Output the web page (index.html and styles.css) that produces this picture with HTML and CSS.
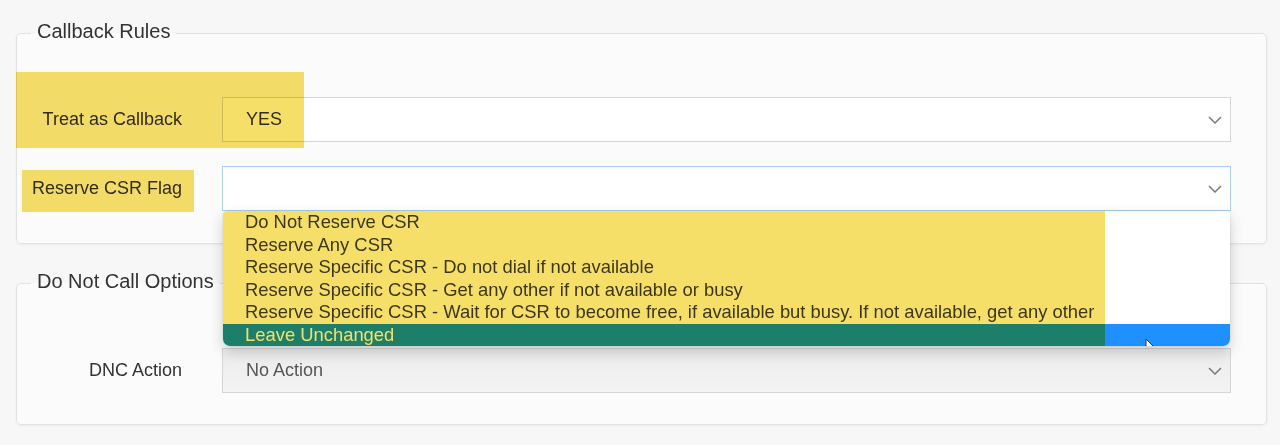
FILE: index.html
```html
<!DOCTYPE html>
<html lang="en">
<head>
<meta charset="utf-8">
<title>Callback Rules</title>
<link rel="stylesheet" href="styles.css">
</head>
<body>
<div class="page">
  <fieldset class="group group-callback">
    <legend class="legend">Callback Rules</legend>
    <div class="form">
      <label class="label">Treat as Callback</label>
      <div class="select">
        <span class="value">YES</span>
        <svg class="chev" width="14" height="8" viewBox="0 0 14 8"><path d="M1 1 L7 7 L13 1" fill="none" stroke="#7a7a7a" stroke-width="1.5"/></svg>
      </div>
      <label class="label">Reserve CSR Flag</label>
      <div class="select select-focus">
        <span class="value"></span>
        <svg class="chev" width="14" height="8" viewBox="0 0 14 8"><path d="M1 1 L7 7 L13 1" fill="none" stroke="#7a7a7a" stroke-width="1.5"/></svg>
        <ul class="dropdown">
          <li class="opt">Do Not Reserve CSR</li>
          <li class="opt">Reserve Any CSR</li>
          <li class="opt">Reserve Specific CSR - Do not dial if not available</li>
          <li class="opt">Reserve Specific CSR - Get any other if not available or busy</li>
          <li class="opt">Reserve Specific CSR - Wait for CSR to become free, if available but busy. If not available, get any other</li>
          <li class="opt opt-selected">Leave Unchanged</li>
          <li class="mark mark-list"></li>
          <li class="cursor"><svg width="11" height="17" viewBox="0 0 11 17"><path d="M1 1 L1 14 L4 11 L6.5 16 L8.5 15 L6 10 L10 10 Z" fill="#fff" stroke="#333" stroke-width="1"/></svg></li>
        </ul>
      </div>
    </div>
  </fieldset>

  <fieldset class="group group-dnc">
    <legend class="legend">Do Not Call Options</legend>
    <div class="form">
      <label class="label">DNC Action</label>
      <div class="select select-muted">
        <span class="value value-muted">No Action</span>
        <svg class="chev" width="14" height="8" viewBox="0 0 14 8"><path d="M1 1 L7 7 L13 1" fill="none" stroke="#7a7a7a" stroke-width="1.5"/></svg>
      </div>
    </div>
  </fieldset>

  <div class="mark mark-treat"></div>
  <div class="mark mark-reserve"></div>
</div>
</body>
</html>
```

FILE: styles.css
```css
* { box-sizing: border-box; }

html, body {
  margin: 0;
  padding: 0;
  background: #f7f7f7;
}

body {
  font-family: "Liberation Sans", Arial, Helvetica, sans-serif;
  color: #333;
}

.page {
  position: relative;
  padding: 20px 13px 0 16px;
  height: 445px;
  overflow: hidden;
}

.group {
  margin: 0;
  border: 1px solid #e2e2e2;
  border-radius: 5px;
  background: #fbfbfb;
  box-shadow: 0 1px 3px rgba(0, 0, 0, 0.05);
  padding: 0 35px 32px 0;
  min-width: 0;
}

.group-dnc {
  margin-top: 26px;
  padding-bottom: 31px;
}

.legend {
  margin-left: 14px;
  padding: 0 6px 4px;
  font-size: 20px;
  line-height: 22px;
  color: #333;
}

.form {
  display: grid;
  grid-template-columns: 165px 1fr;
  column-gap: 40px;
  row-gap: 24px;
  align-items: center;
  padding-top: 51px;
}

.group-dnc .form {
  padding-top: 52px;
}

.label {
  text-align: right;
  font-size: 18px;
  color: #333;
}

.select {
  position: relative;
  height: 45px;
  border: 1px solid #d5d5d5;
  background: #fff;
  display: flex;
  align-items: center;
  padding: 0 8px 0 23px;
}

.select-focus {
  border-color: #a9d2f3;
}

.select-muted {
  background: linear-gradient(#ececec, #f3f3f3);
}

.value {
  flex: 1;
  font-size: 18px;
  color: #333;
}

.value-muted {
  color: #555;
}

.chev {
  display: block;
}

.dropdown {
  position: absolute;
  z-index: 5;
  top: calc(100% + 1px);
  left: 0;
  right: 0;
  margin: 0;
  padding: 0;
  list-style: none;
  background: #fff;
  border-radius: 4px 4px 7px 7px;
  box-shadow: 0 6px 14px rgba(0, 0, 0, 0.18), 0 0 2px rgba(0, 0, 0, 0.15);
  overflow: hidden;
}

.opt {
  height: 22.6px;
  line-height: 22.6px;
  padding-left: 22px;
  font-size: 18.4px;
  color: #3f3f3f;
  white-space: nowrap;
}

.opt-selected {
  height: 22px;
  line-height: 22px;
  background: #1e90ff;
  color: #fff;
}

.mark {
  position: absolute;
  background: #f6df69;
  mix-blend-mode: multiply;
  pointer-events: none;
}

.mark-list {
  left: 0;
  top: 0;
  bottom: 0;
  width: 882px;
  border-radius: 4px 0 0 7px;
}

.mark-treat {
  left: 16px;
  top: 72px;
  width: 288px;
  height: 76px;
  z-index: 2;
}

.mark-reserve {
  left: 22px;
  top: 170px;
  width: 172px;
  height: 42px;
  z-index: 2;
}

.cursor {
  position: absolute;
  left: 922px;
  bottom: -9px;
  line-height: 0;
}
```
